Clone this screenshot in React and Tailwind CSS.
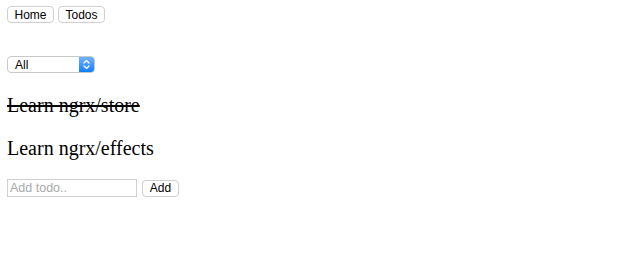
import React, { useState } from 'react';

const sans = "font-['Helvetica','Liberation_Sans',Arial,sans-serif]";

const todosSeed = [
  { id: 1, text: 'Learn ngrx/store', done: true },
  { id: 2, text: 'Learn ngrx/effects', done: false },
];

const NavButton = ({ children, className = '' }) => (
  <button
    className={`h-[17px] border border-[#cfcfcf] rounded-[4px] bg-white text-[12px] leading-none text-black ${sans} ${className}`}
  >
    {children}
  </button>
);

const App = () => {
  const [todos] = useState(todosSeed);
  const [filter] = useState('All');

  return (
    <div className="w-[641px] h-[274px] bg-white px-[7px] pt-[6px] font-['Liberation_Serif','Times_New_Roman',serif] text-black">
      {/* nav */}
      <div className="flex gap-[4px]">
        <NavButton className="w-[47px]">Home</NavButton>
        <NavButton className="w-[47px]">Todos</NavButton>
      </div>

      {/* filter select */}
      <div className={`mt-[33px] flex w-[88px] h-[17px] border border-[#c8c8c8] rounded-[4px] overflow-hidden bg-white ${sans}`}>
        <div className="flex-1 flex items-center pl-[7px] text-[12px] leading-none">{filter}</div>
        <div className="w-[15px] h-full flex items-center justify-center bg-gradient-to-b from-[#6cb3fa] to-[#0a7cfd]">
          <svg width="7" height="11" viewBox="0 0 7 11" fill="none" stroke="white" strokeWidth="1.3" strokeLinecap="round" strokeLinejoin="round">
            <path d="M1 4L3.5 1.5L6 4" />
            <path d="M1 7L3.5 9.5L6 7" />
          </svg>
        </div>
      </div>

      {/* list */}
      <div className="mt-[21px] flex flex-col gap-[20px]">
        {todos.map((t) => (
          <div key={t.id} className={`text-[20px] leading-[23px] ${t.done ? 'line-through' : ''}`}>
            {t.text}
          </div>
        ))}
      </div>

      {/* add */}
      <div className="mt-[19px] flex items-center gap-[5px]">
        <input
          placeholder="Add todo.."
          className={`w-[130px] h-[18px] border border-[#d0d0d0] px-[2px] text-[12.5px] outline-none placeholder:text-[#a9a9a9] ${sans}`}
        />
        <NavButton className="w-[37px]">Add</NavButton>
      </div>
    </div>
  );
};

export default App;
